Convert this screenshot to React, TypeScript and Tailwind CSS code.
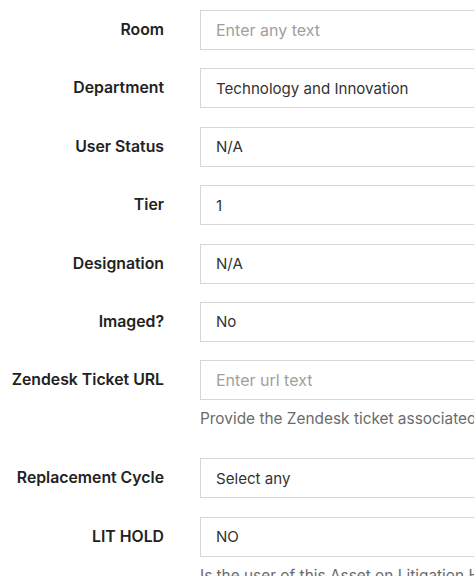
import React from "react";

type Row = {
  label: string;
  value?: string;
  placeholder?: string;
  help?: string;
};

const rows: Row[] = [
  { label: "Room", placeholder: "Enter any text" },
  { label: "Department", value: "Technology and Innovation" },
  { label: "User Status", value: "N/A" },
  { label: "Tier", value: "1" },
  { label: "Designation", value: "N/A" },
  { label: "Imaged?", value: "No" },
  {
    label: "Zendesk Ticket URL",
    placeholder: "Enter url text",
    help: "Provide the Zendesk ticket associated with this asset",
  },
  { label: "Replacement Cycle", value: "Select any" },
  {
    label: "LIT HOLD",
    value: "NO",
    help: "Is the user of this Asset on Litigation Hold?",
  },
];

export default function App() {
  return (
    <div
      className="w-[474px] h-[576px] overflow-hidden bg-white"
      style={{ fontFamily: "Inter, 'Liberation Sans', sans-serif" }}
    >
      <div className="w-[700px] pt-[10px] flex flex-col">
        {rows.map((r, i) => (
          <div key={i} className={i === 0 ? "" : r.label === "Replacement Cycle" ? "mt-[18px]" : "mt-[18.4px]"}>
            <div className="flex items-center">
              <div className="w-[164px] shrink-0 text-right text-[15.8px] font-semibold text-[#222222] leading-none whitespace-nowrap">
                {r.label}
              </div>
              <div className="ml-[36px] flex-1 h-[40px] border border-[#d6d6d6] bg-white flex items-center pl-[15px] leading-none">
                {r.value ? (
                  <span className="text-[15.1px] text-[#333333]">{r.value}</span>
                ) : (
                  <span className="text-[16px] text-[#a0a0a0]">{r.placeholder}</span>
                )}
              </div>
            </div>
            {r.help && (
              <div className="ml-[200px] mt-[10px] text-[15.4px] leading-[18px] text-[#6b6b6b] whitespace-nowrap">
                {r.help}
              </div>
            )}
            {r.help && r.label !== "LIT HOLD" && <div className="h-[12px]" />}
          </div>
        ))}
      </div>
    </div>
  );
}
